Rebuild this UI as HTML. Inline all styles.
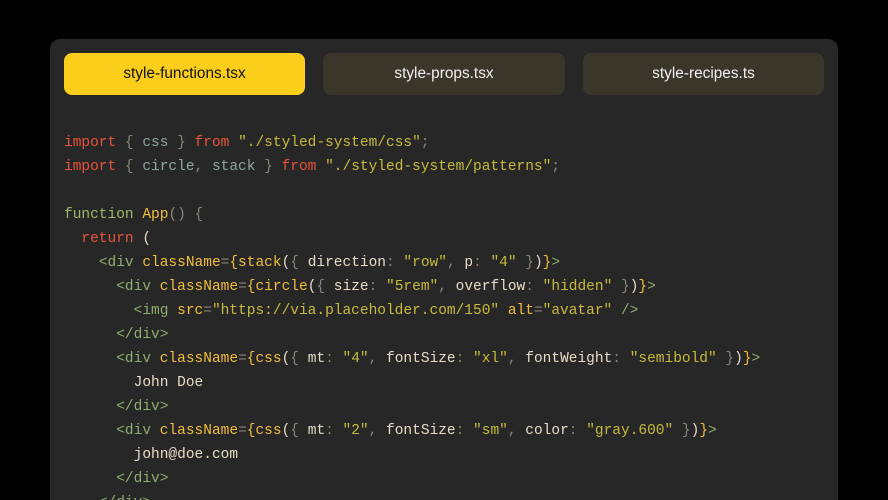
<!DOCTYPE html>
<html><head><meta charset="utf-8"><style>
html,body{margin:0;width:888px;height:500px;background:#000;overflow:hidden;}
.card{position:absolute;left:50px;top:39px;width:788px;height:461px;background:#272727;border-radius:10px 10px 0 0;overflow:hidden;}
.tab{position:absolute;top:14px;height:42px;border-radius:8px;background:#3a3629;color:#f0f0f0;font:15.4px "Liberation Sans",sans-serif;display:flex;align-items:center;justify-content:center;}
.code{position:absolute;left:14px;top:92px;font:14.5px/24px "Liberation Mono",monospace;white-space:pre;color:#e6dcc8;margin:0;}
.k{color:#e8533d}.p{color:#8a8478}.i{color:#8fa79c}.s{color:#c8bb3c}.f{color:#a3b868}.y{color:#f2be3a}.t{color:#8fae6e}.w{color:#e6dcc8}
</style></head><body>
<div class="card">
<div class="tab" style="left:14px;width:241px;background:#fbce1c;color:#111">style-functions.tsx</div>
<div class="tab" style="left:273px;width:242px">style-props.tsx</div>
<div class="tab" style="left:533px;width:241px">style-recipes.ts</div>
<pre class="code"><span class="k">import</span> <span class="p">{</span> <span class="i">css</span> <span class="p">}</span> <span class="k">from</span> <span class="s">"./styled-system/css"</span><span class="p">;</span>
<span class="k">import</span> <span class="p">{</span> <span class="i">circle</span><span class="p">,</span> <span class="i">stack</span> <span class="p">}</span> <span class="k">from</span> <span class="s">"./styled-system/patterns"</span><span class="p">;</span>

<span class="f">function</span> <span class="y">App</span><span class="p">() {</span>
  <span class="k">return</span> <span class="w">(</span>
    <span class="t">&lt;div</span> <span class="y">className</span><span class="p">=</span><span class="y">{stack</span><span class="w">(</span><span class="p">{</span> <span class="w">direction</span><span class="p">:</span> <span class="s">"row"</span><span class="p">,</span> <span class="w">p</span><span class="p">:</span> <span class="s">"4"</span> <span class="p">}</span><span class="w">)</span><span class="y">}</span><span class="t">&gt;</span>
      <span class="t">&lt;div</span> <span class="y">className</span><span class="p">=</span><span class="y">{circle</span><span class="w">(</span><span class="p">{</span> <span class="w">size</span><span class="p">:</span> <span class="s">"5rem"</span><span class="p">,</span> <span class="w">overflow</span><span class="p">:</span> <span class="s">"hidden"</span> <span class="p">}</span><span class="w">)</span><span class="y">}</span><span class="t">&gt;</span>
        <span class="t">&lt;img</span> <span class="y">src</span><span class="p">=</span><span class="s">"https://via.placeholder.com/150"</span> <span class="y">alt</span><span class="p">=</span><span class="s">"avatar"</span> <span class="t">/&gt;</span>
      <span class="t">&lt;/div&gt;</span>
      <span class="t">&lt;div</span> <span class="y">className</span><span class="p">=</span><span class="y">{css</span><span class="w">(</span><span class="p">{</span> <span class="w">mt</span><span class="p">:</span> <span class="s">"4"</span><span class="p">,</span> <span class="w">fontSize</span><span class="p">:</span> <span class="s">"xl"</span><span class="p">,</span> <span class="w">fontWeight</span><span class="p">:</span> <span class="s">"semibold"</span> <span class="p">}</span><span class="w">)</span><span class="y">}</span><span class="t">&gt;</span>
        <span class="w">John Doe</span>
      <span class="t">&lt;/div&gt;</span>
      <span class="t">&lt;div</span> <span class="y">className</span><span class="p">=</span><span class="y">{css</span><span class="w">(</span><span class="p">{</span> <span class="w">mt</span><span class="p">:</span> <span class="s">"2"</span><span class="p">,</span> <span class="w">fontSize</span><span class="p">:</span> <span class="s">"sm"</span><span class="p">,</span> <span class="w">color</span><span class="p">:</span> <span class="s">"gray.600"</span> <span class="p">}</span><span class="w">)</span><span class="y">}</span><span class="t">&gt;</span>
        <span class="w">john@doe.com</span>
      <span class="t">&lt;/div&gt;</span>
    <span class="t">&lt;/div&gt;</span>
</pre>
</div>
</body></html>
